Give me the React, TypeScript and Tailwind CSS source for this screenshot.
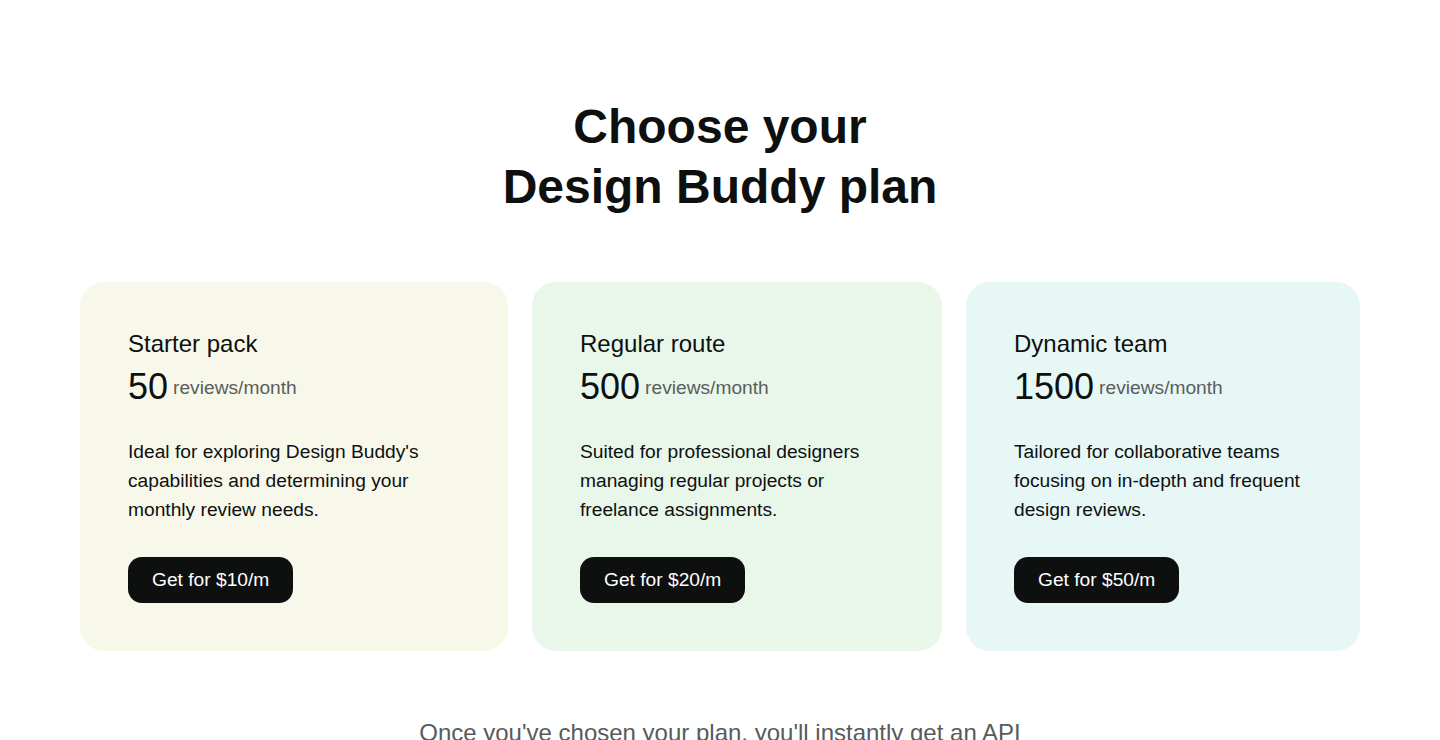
const plans = [
  {
    name: "Starter pack",
    count: "50",
    description: "Ideal for exploring Design Buddy's capabilities and determining your monthly review needs.",
    price: "$10/m",
    className: "w-[428px] bg-[#f7f8ea]",
  },
  {
    name: "Regular route",
    count: "500",
    description: "Suited for professional designers managing regular projects or freelance assignments.",
    price: "$20/m",
    className: "w-[410px] bg-[#e8f7ea]",
  },
  {
    name: "Dynamic team",
    count: "1500",
    description: "Tailored for collaborative teams focusing on in-depth and frequent design reviews.",
    price: "$50/m",
    className: "w-[394px] bg-[#e7f7f5]",
  },
];

export default function App() {
  return (
    <main className="min-h-screen bg-white pt-[97px] font-['Liberation_Sans',Arial,sans-serif] text-[#0e1010]">
      <h1 className="text-center text-[48px] font-bold leading-[60px]">
        Choose your
        <br />
        Design Buddy plan
      </h1>

      <div className="mt-[65px] flex justify-center gap-6 px-20">
        {plans.map((plan) => (
          <article key={plan.name} className={`shrink-0 rounded-3xl px-12 pt-12 pb-12 ${plan.className}`}>
            <h2 className="text-2xl leading-[28px]">{plan.name}</h2>
            <div className="mt-[9px] flex items-end gap-[5px]">
              <span className="text-[36px] leading-[40px]">{plan.count}</span>
              <span className="pb-[10px] text-[19.2px] leading-[19px] text-[#5a5d5d]">reviews/month</span>
            </div>
            <p className="mt-[31px] text-[19.2px] leading-[28.8px]">{plan.description}</p>
            <button className="mt-[33px] rounded-[14px] bg-[#0e1010] px-6 py-[9px] text-[19.2px] leading-[28px] text-white">
              Get for {plan.price}
            </button>
          </article>
        ))}
      </div>

      <p className="mx-auto mt-[66px] max-w-[620px] text-center text-2xl leading-8 text-[#585b5b]">
        Once you've chosen your plan, you'll instantly get an API key to start reviewing your designs.
      </p>
    </main>
  );
}
